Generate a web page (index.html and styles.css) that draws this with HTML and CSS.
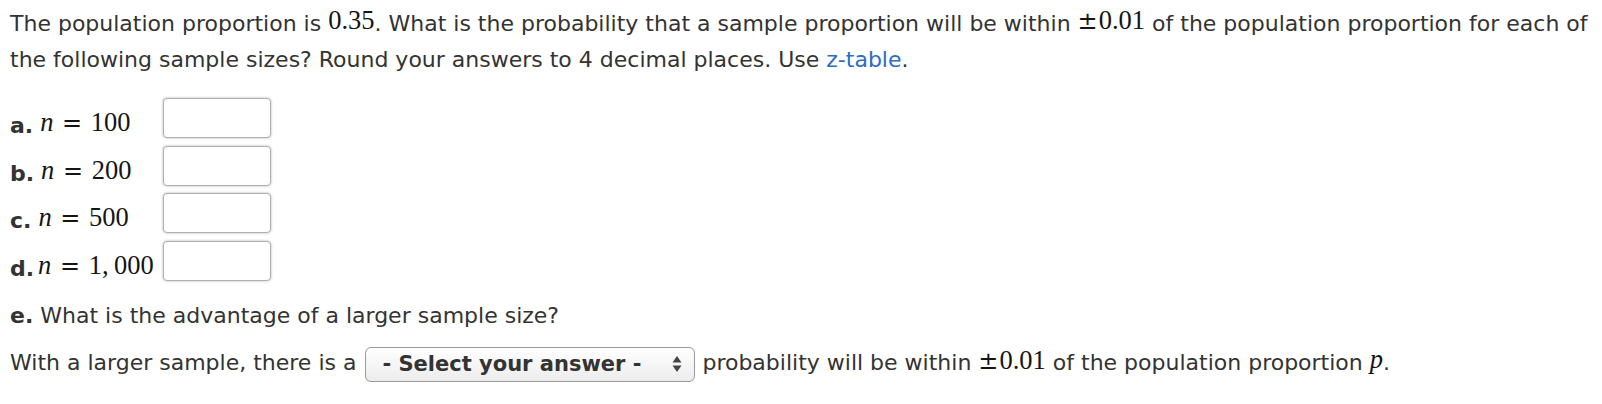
FILE: index.html
```html
<!DOCTYPE html>
<html lang="en">
<head>
<meta charset="utf-8">
<title>Population proportion</title>
<link rel="stylesheet" href="styles.css">
</head>
<body>
<div class="page">
  <p class="question">The population proportion is <span class="math">0.35</span>. What is the probability that a sample proportion will be within <span class="math"><span class="op">±</span>0.01</span> of the population proportion for each of the following sample sizes? Round your answers to 4 decimal places. Use <a class="link" href="#">z-table</a>.</p>

  <div class="parts">
    <div class="part-label"><b>a.</b> <span class="math"><i>n</i><span class="eq">=</span>100</span></div>
    <input class="answer" type="text" aria-label="a">
    <div class="part-label"><b>b.</b> <span class="math"><i>n</i><span class="eq">=</span>200</span></div>
    <input class="answer" type="text" aria-label="b">
    <div class="part-label"><b>c.</b> <span class="math"><i>n</i><span class="eq">=</span>500</span></div>
    <input class="answer" type="text" aria-label="c">
    <div class="part-label"><b>d.</b><span class="math tight"><i>n</i><span class="eq">=</span>1,<span class="thin"></span>000</span></div>
    <input class="answer" type="text" aria-label="d">
  </div>

  <p class="q-e"><b>e.</b> What is the advantage of a larger sample size?</p>

  <p class="q-f">With a larger sample, there is a <span class="select"><span class="select-text">- Select your answer -</span><svg class="arrows" width="10" height="18" viewBox="0 0 10 18"><path d="M5 1 L9.5 7.5 H0.5 Z M5 17 L9.5 10.5 H0.5 Z" fill="#444"/></svg></span> probability will be within <span class="math"><span class="op">±</span>0.01</span> of the population proportion <span class="math"><i>p</i></span>.</p>
</div>
</body>
</html>
```

FILE: styles.css
```css
html, body {
  margin: 0;
  padding: 0;
  background: #ffffff;
}

body {
  font-family: "DejaVu Sans", Verdana, sans-serif;
  font-size: 22px;
  color: #333333;
}

.page {
  padding: 6px 4px 0 10px;
}

p {
  margin: 0;
}

.question {
  line-height: 36px;
}

.math {
  font-family: "Liberation Serif", "Times New Roman", serif;
  font-size: 26.5px;
  color: #151515;
  vertical-align: 0.06em;
  line-height: 1;
}

.math i {
  font-style: italic;
}

.op {
  font-family: "DejaVu Serif", serif;
  font-size: 24px;
  margin-right: 1px;
}

.eq {
  font-family: "DejaVu Serif", serif;
  font-size: 24px;
  margin: 0 0.36em;
}

.tight {
  margin-left: 4px;
}

.thin {
  display: inline-block;
  width: 0.2em;
}

.link {
  color: #2b6cc4;
  text-decoration: none;
}

.parts {
  display: grid;
  grid-template-columns: 153px 108px;
  row-gap: 7px;
  margin-top: 20px;
}

.part-label {
  line-height: 26px;
  margin-top: 11px;
  white-space: nowrap;
}

.part-label b {
  font-weight: bold;
}

.answer {
  box-sizing: border-box;
  width: 108px;
  height: 40px;
  margin: 0;
  padding: 0 6px;
  border: 1px solid #b0b0b0;
  border-radius: 4px;
  box-shadow: 0 0 2px 1px rgba(0, 0, 0, 0.14);
  background: #ffffff;
  font: inherit;
}

.q-e {
  line-height: 34px;
  margin-top: 18px;
}

.q-f {
  line-height: 34px;
  margin-top: 13px;
}

.select {
  display: inline-flex;
  align-items: center;
  justify-content: space-between;
  box-sizing: border-box;
  height: 35px;
  width: 330px;
  padding: 0 12px 0 16px;
  margin-left: 2px;
  border: 1px solid #9a9a9a;
  border-radius: 6px;
  background: linear-gradient(#ffffff, #ececec);
  box-shadow: inset 0 1px 0 #ffffff, 0 1px 1px rgba(0, 0, 0, 0.08);
  vertical-align: middle;
}

.select-text {
  font-weight: bold;
  font-size: 21px;
  color: #333333;
  line-height: 1;
}

.arrows {
  display: block;
}
```
